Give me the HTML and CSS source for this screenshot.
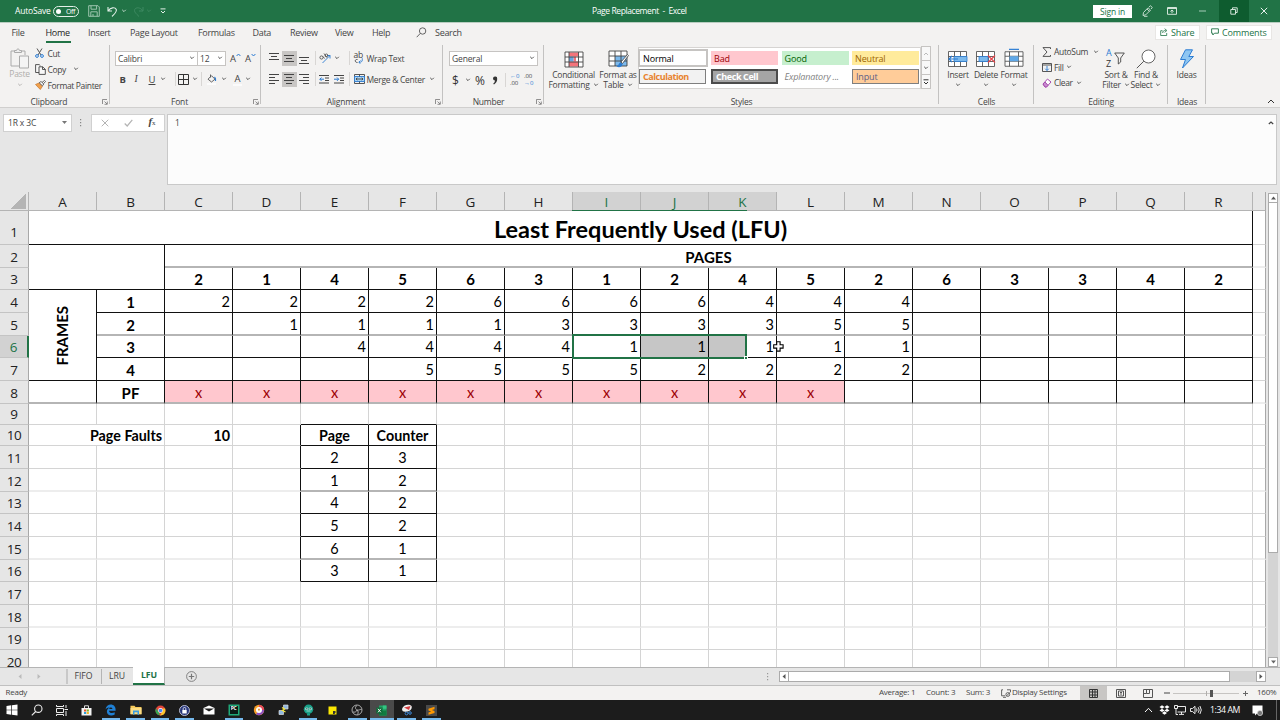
FILE: index.html
```html
<!DOCTYPE html>
<html lang="en">
<head>
<meta charset="utf-8">
<title>Page Replacement - Excel</title>
<link rel="stylesheet" href="styles.css">
</head>
<body>
<svg width="0" height="0" class="defs">
  <symbol id="car" viewBox="0 0 6 4"><path d="M1.200 .8 3 2.600 4.800 .8" fill="none" stroke="currentColor" stroke-width=".9"/></symbol>
  <symbol id="launch" viewBox="0 0 6 6"><path d="M.5 5V.5H5M2.5 2.5 5 5M5.3 2.5v2.8H2.5" fill="none" stroke="#666" stroke-width=".7"/></symbol>
</svg>
<div class="app">
  <header class="titlebar">
    <span class="autosave">AutoSave</span>
    <span class="toggle"><i></i>Off</span>
    <svg width="12" height="12" viewBox="0 0 12 12" fill="none" stroke="#a9cdb9" stroke-width=".9"><path d="M.7.7H10l1.3 1.3v9.3H.7zM3 .8v3.400h5.600V.8M2.800 11.200V6.800h6.400v4.400M5 11V9"/></svg>
    <svg width="11" height="11" viewBox="0 0 11 11" fill="none" stroke="#e4f0e9" stroke-width="1.1"><path d="M1 1v4h4M1.300 4.700C3.500 1.300 8 .9 9.300 3.500 10 6 8 7.500 5 10.500"/></svg>
    <svg class="pale" width="6" height="4"><use href="#car"/></svg>
    <svg class="dim" width="11" height="11" viewBox="0 0 11 11" fill="none" stroke="#3f8a62" stroke-width="1"><path d="M10 1v4H6M9.700 4.700C7.500 1.300 3 .9 1.700 3.500 1 6 3 7.500 6 10.500"/></svg>
    <svg class="faint" width="6" height="4"><use href="#car"/></svg>
    <svg width="6" height="6" viewBox="0 0 6 6" fill="none" stroke="#e4f0e9"><path d="M.5.9h5M1 3l2 2 2-2"/></svg>
    <span class="doc">Page Replacement&nbsp; -&nbsp; Excel</span>
    <span class="signin">Sign in</span>
    <svg width="11" height="12" viewBox="0 0 11 12" fill="none" stroke="#d7e8de" stroke-width=".9"><path d="M1.500 7.500 6 2.800l2.500 2.300-4.700 4.700-2.800.7zM5 4l2.400 2.300M7 2 8.500.8l1.800 1.700L9 4M2 11.300h3.500"/></svg>
    <svg width="10" height="8" viewBox="0 0 10 8" fill="none" stroke="#e4f0e9" stroke-width=".9"><path d="M.5.5h9v6.800h-9zM.5 1.500h9M5 6.200V3M3.400 4.500 5 3l1.600 1.500"/></svg>
    <svg width="7" height="2"><path d="M0 1h7" stroke="#a6cbb7"/></svg>
    <span class="restore"><svg width="8" height="8" viewBox="0 0 8 8" fill="none" stroke="#e4f0e9" stroke-width=".9"><path d="M.8 2.500h4.700v4.700H.8zM2.500 2.400V.8h4.700v4.700H5.600"/></svg></span>
    <svg width="8" height="8" viewBox="0 0 8 8"><path d="M.8.8l6.400 6.400M7.200.8.8 7.200" stroke="#fff" stroke-width=".9"/></svg>
  </header>

  <nav class="tabs">
    <span>File</span><span class="on">Home</span><span>Insert</span><span>Page Layout</span><span>Formulas</span><span>Data</span><span>Review</span><span>View</span><span>Help</span>
    <svg width="11" height="11" viewBox="0 0 11 11" fill="none" stroke="#555" stroke-width=".9"><circle cx="6.600" cy="4" r="3.200"/><path d="M4.300 6.400.7 10.200"/></svg>
    <span>Search</span>
    <span class="btn share"><svg width="8" height="8" viewBox="0 0 8 8" fill="none" stroke="#217346" stroke-width=".8"><path d="M2.500 2.700H.7v4.800h6V5M2.700 5c0-2 1-2.500 3-2.500M4.600.7l2.300 1.800-2.300 1.900"/></svg>Share</span>
    <span class="btn comm"><svg width="8" height="8" viewBox="0 0 8 8" fill="none" stroke="#217346" stroke-width=".9"><path d="M.6.800h6.800v4.400H3.500L1.800 7V5.200H.6z"/></svg>Comments</span>
  </nav>

  <section class="ribbon">
    <div class="group clip">
      <div class="body">
        <div class="big off">
          <svg width="20" height="21" viewBox="0 0 20 21" fill="none" stroke="#aaa" stroke-width="1"><path d="M1 3h4M11 3h4v4M1 3v15h8"/><path d="M4.500 4.500V2.500h2C6.500.5 9.500.5 9.500 2.500h2v2z" fill="#eee"/><path d="M9.500 8h9v12h-9z" fill="#f4f4f4"/></svg>
          <span>Paste</span><svg class="c" width="6" height="4"><use href="#car"/></svg>
        </div>
        <div class="list">
          <div class="li"><svg width="9" height="10" viewBox="0 0 9 10" fill="none"><path d="M2 .5 6 7M7 .5 3 7" stroke="#555"/><circle cx="2" cy="8" r="1.400" stroke="#2b7cd3"/><circle cx="7" cy="8" r="1.400" stroke="#2b7cd3"/></svg><span>Cut</span></div>
          <div class="li"><svg width="11" height="11" viewBox="0 0 11 11" fill="#f8f8f8" stroke="#444" stroke-width=".9"><path d="M4 8.500H.6V.6h3.600l1.300 1.300"/><path d="M4 2.800h3.700l2.600 2.500v5.100H4zM7.500 2.800v2.700h2.800"/></svg><span>Copy</span><svg class="c" width="6" height="4"><use href="#car"/></svg></div>
          <div class="li"><svg width="11" height="10" viewBox="0 0 11 10"><path d="M.5 4.500 4 3l3.300 3.500-2 3z" fill="#f0a04b" stroke="#c7762b" stroke-width=".7"/><path d="M4.200 2.700 6 1.500 8.700 4 7.500 5.800zM7 2.500 9.600.5l.9 1L8.400 3.800" fill="#fff" stroke="#444" stroke-width=".8"/></svg><span>Format Painter</span></div>
        </div>
      </div>
      <div class="label">Clipboard<svg width="6" height="6"><use href="#launch"/></svg></div>
    </div>

    <div class="group font">
      <div class="body two">
        <div class="r1"><span class="combo">Calibri<svg class="c" width="6" height="4"><use href="#car"/></svg></span><span class="combo">12<svg class="c" width="6" height="4"><use href="#car"/></svg></span>
          <span class="aa">A<svg width="5" height="4" viewBox="0 0 5 4" fill="none" stroke="#2b7cd3"><path d="M.6 3 2.500 1l1.900 2"/></svg></span><span class="aa">A<svg width="5" height="4" viewBox="0 0 5 4" fill="none" stroke="#2b7cd3"><path d="M.6 1 2.500 3l1.900-2"/></svg></span></div>
        <div class="r2"><b>B</b><i>I</i><u>U</u><svg class="c" width="6" height="4"><use href="#car"/></svg><em></em>
          <svg width="11" height="11" viewBox="0 0 11 11" fill="none" stroke="#333"><path d="M.5.5h10v10H.5zM5.500.5v10M.5 5.500h10"/></svg><svg class="c" width="6" height="4"><use href="#car"/></svg><em></em>
          <svg width="10" height="11" viewBox="0 0 10 11" fill="none"><path d="M1 5.200 4.500 1.700 8 5.200 4.500 8zM3.500.5v3" stroke="#555" stroke-width=".9"/><path d="M7.500 3c1 1 1.300 2.500 1 4" stroke="#2b7cd3" stroke-width="1.200"/><path d="M0 9h9v2H0z" fill="#fbfbfb"/></svg><svg class="c" width="6" height="4"><use href="#car"/></svg>
          <span class="fc">A</span><svg class="c" width="6" height="4"><use href="#car"/></svg></div>
      </div>
      <div class="label">Font<svg width="6" height="6"><use href="#launch"/></svg></div>
    </div>

    <div class="group align">
      <div class="body two">
        <div class="r3"><svg width="10" height="14" viewBox="0 0 10 14" stroke="#444"><path d="M0 2.500h10M2 5.500h6M0 8.500h10"/></svg><span class="sel"><svg width="10" height="14" viewBox="0 0 10 14" stroke="#444"><path d="M0 4.500h10M2 7.500h6M0 10.500h10"/></svg></span><svg width="10" height="14" viewBox="0 0 10 14" stroke="#444"><path d="M0 6.500h10M2 9.500h6M0 12.500h10"/></svg><em></em>
          <svg width="12" height="12" viewBox="0 0 12 12" fill="none"><path d="M3.500 11 11 3.500M11 3.500H8M11 3.500v3" stroke="#2b7cd3" stroke-width=".9"/><circle cx="2.500" cy="5.500" r="1.600" stroke="#444" stroke-width=".8"/><path d="M4 4.500l1.500 2M5 1.500l3 4" stroke="#444" stroke-width=".8"/><circle cx="7.400" cy="3.400" r="1.400" stroke="#444" stroke-width=".8"/></svg><svg class="c" width="6" height="4"><use href="#car"/></svg><em></em>
          <span class="wi">ab<svg width="9" height="6" viewBox="0 0 9 6" fill="none"><path d="M3.500 1.500C.5 1 .5 4.500 3.500 4.500" stroke="#444" stroke-width=".9"/><path d="M8.300.3v1.500c0 2-1.300 2.500-3.300 2.500M6.500 2.500 4.800 4.300l1.700 1.500" stroke="#2b7cd3" stroke-width=".9"/></svg></span><span class="wt">Wrap Text</span></div>
        <div class="r3"><svg width="10" height="14" viewBox="0 0 10 14" stroke="#444"><path d="M0 2.500h10M0 5.500h6M0 8.500h10M0 11.500h6"/></svg><span class="sel"><svg width="10" height="14" viewBox="0 0 10 14" stroke="#444"><path d="M0 2.500h10M2 5.500h6M0 8.500h10M2 11.500h6"/></svg></span><svg width="10" height="14" viewBox="0 0 10 14" stroke="#444"><path d="M0 2.500h10M4 5.500h6M0 8.500h10M4 11.500h6"/></svg><em></em>
          <svg width="11" height="9" viewBox="0 0 11 9" fill="none" stroke="#444"><path d="M0 .5h10M6 3h4M6 5.500h4M0 8h10"/><path d="M5 4.200H.8M2.500 2.500.8 4.200l1.700 1.700" stroke="#2b7cd3"/></svg><svg width="11" height="9" viewBox="0 0 11 9" fill="none" stroke="#444"><path d="M0 .5h10M6 3h4M6 5.500h4M0 8h10"/><path d="M0 4.200h4.500M3 2.500l1.700 1.700L3 5.900" stroke="#2b7cd3"/></svg><em></em>
          <svg width="11" height="10" viewBox="0 0 11 10" fill="none" stroke="#444" stroke-width=".9"><path d="M.5.5h10v9H.5z"/><path d="M.5 2.500h10v5H.5z" fill="#a9d3f2" stroke="#2b7cd3"/><path d="M2 5h7M3.300 3.800 2 5l1.300 1.200M7.700 3.800 9 5 7.700 6.200M5.500.5v2M5.500 7.500v2"/></svg><span class="mt">Merge &amp; Center</span><svg class="c" width="6" height="4"><use href="#car"/></svg></div>
      </div>
      <div class="label">Alignment<svg width="6" height="6"><use href="#launch"/></svg></div>
    </div>

    <div class="group number">
      <div class="body two">
        <div class="r4"><span class="combo gen">General<svg class="c" width="6" height="4"><use href="#car"/></svg></span></div>
        <div class="r5"><span class="sym">$</span><svg class="c" width="6" height="4"><use href="#car"/></svg><span class="sym">%</span><svg width="6" height="9" viewBox="0 0 6 9"><path d="M3 .5A2 2 0 1 0 3 4.500Q3 6.500 1.200 7.800L2 8.500Q5.300 6.300 5.200 2.700A2 2 0 0 0 3 .5z" fill="#333"/></svg><em></em>
          <span class="dec"><i>←0</i><s>.00</s></span><span class="dec"><s>.00</s><i>→0</i></span></div>
      </div>
      <div class="label">Number<svg width="6" height="6"><use href="#launch"/></svg></div>
    </div>

    <div class="group sty">
      <div class="body">
        <div class="big cf">
          <svg width="20" height="16" viewBox="0 0 20 16"><path fill="#fff" d="M1 .5h18v15H1z"/><path fill="#f3747b" d="M5 1h9v4H5zM5 10h9v5H5z"/><path fill="#f3747b" d="M9.500 5H12v5H9.500z"/><path fill="#6aa7e0" d="M5 5h4.500v5H5z"/><path fill="none" stroke="#444" stroke-width=".9" d="M1 .5h18v15H1zM1 5.500h18M1 10.500h18M5 .5v15M14.500.5v15"/></svg>
          <span>Conditional</span><span>Formatting <svg class="c" width="6" height="4"><use href="#car"/></svg></span>
        </div>
        <div class="big ft">
          <svg width="21" height="18" viewBox="0 0 21 18"><path fill="#fff" d="M1 .5h18v15H1z"/><path fill="#7cb9ec" d="M7 5.500h12v10H7z"/><path fill="none" stroke="#444" stroke-width=".9" d="M1 .5h18v15H1zM1 5.500h18M1 10.500h18M7 .5v15M13 .5v15"/><path d="M19.500 4 13 11.500l1.500 1.500L20.500 5z" fill="#fff" stroke="#444" stroke-width=".8"/><path d="M12.500 12c-2 .5-1.500 3-4 4 3 2 6 0 6-2.500z" fill="#2b7cd3"/></svg>
          <span>Format as</span><span>Table <svg class="c" width="6" height="4"><use href="#car"/></svg></span>
        </div>
        <div class="gallery">
          <span class="normal">Normal</span><span class="bad">Bad</span><span class="good">Good</span><span class="neu">Neutral</span>
          <span class="calc">Calculation</span><span class="chk">Check Cell</span><span class="exp">Explanatory ...</span><span class="inp">Input</span>
        </div>
        <div class="gs"><i><svg width="6" height="4" viewBox="0 0 6 4" fill="none" stroke="#bbb"><path d="M1 3l2-2 2 2"/></svg></i><i><svg width="6" height="4"><use href="#car"/></svg></i><i><svg width="6" height="6" viewBox="0 0 6 6" fill="none" stroke="#333"><path d="M.5.8h5M1 3l2 2 2-2"/></svg></i></div>
      </div>
      <div class="label">Styles</div>
    </div>

    <div class="group cells">
      <div class="body">
        <div class="big"><svg width="20" height="17" viewBox="0 0 20 17"><path fill="#fff" stroke="#555" stroke-width=".9" d="M.5.500h18v15H.5zM.5 5.500h18M.5 10.500h18M6.500.5v15M12.500.5v15"/><path fill="#7cb9ec" stroke="#2b7cd3" stroke-width=".8" d="M6 5.500h13v5H6z"/><path d="M10 8H1M4 5 1 8l3 3" fill="none" stroke="#2b7cd3" stroke-width="1.200"/></svg><span>Insert</span><svg class="c" width="6" height="4"><use href="#car"/></svg></div>
        <div class="big"><svg width="20" height="17" viewBox="0 0 20 17"><path fill="#fff" stroke="#555" stroke-width=".9" d="M.5.500h18v15H.5zM.5 5.500h18M.5 10.500h18M6.500.5v15M12.500.5v15"/><path fill="#7cb9ec" stroke="#2b7cd3" stroke-width=".8" d="M3 5.500h9v5H3z"/><path d="M12 4.500 19 11.500M19 4.500 12 11.500" stroke="#e8474c" stroke-width="1.200"/></svg><span>Delete</span><svg class="c" width="6" height="4"><use href="#car"/></svg></div>
        <div class="big fm"><svg width="20" height="19" viewBox="0 0 20 19"><path d="M5 .6h10" stroke="#2b7cd3" stroke-width="1.200"/><path fill="#fff" stroke="#555" stroke-width=".9" d="M1 3h18v14.500H1zM1 7.500h18M1 12.500h18M5.500 3v14.500M14.500 3v14.500"/><path fill="#5fa8e8" d="M5.500 7.500h9v5h-9z"/></svg><span>Format</span><svg class="c" width="6" height="4"><use href="#car"/></svg></div>
      </div>
      <div class="label">Cells</div>
    </div>

    <div class="group edit">
      <div class="body">
        <div class="list">
          <div class="li"><svg width="10" height="10" viewBox="0 0 10 10" fill="none" stroke="#444" stroke-width=".9"><path d="M8.500 2V.6H1L5 5 1 9.400h7.500V8"/></svg><span>AutoSum</span><svg class="c" width="6" height="4"><use href="#car"/></svg></div>
          <div class="li"><svg width="10" height="9" viewBox="0 0 10 9" fill="none" stroke="#444" stroke-width=".9"><path d="M.5.5h9v8h-9zM.5 2h9"/><path d="M5 3v4.500M3.200 5.700 5 7.500l1.800-1.800" stroke="#2b7cd3"/></svg><span>Fill <svg class="c" width="6" height="4"><use href="#car"/></svg></span></div>
          <div class="li"><svg width="10" height="10" viewBox="0 0 10 10" fill="#fff" stroke="#a64dae" stroke-width="1"><path d="M1 6 5.500 1l3.500 3-4.500 5H3z"/><path d="M1 6l2 3h1.500L6 7.300 3 4z" fill="#c98bd0"/></svg><span>Clear <svg class="c" width="6" height="4"><use href="#car"/></svg></span></div>
        </div>
        <div class="big sf"><span class="az"><b>A</b><b>Z</b><svg width="11" height="13" viewBox="0 0 11 13" fill="none" stroke="#444" stroke-width=".9"><path d="M.7 1h9.600L6.700 6v4L4.300 12V6z"/></svg></span><span>Sort &amp;</span><span>Filter <svg class="c" width="6" height="4"><use href="#car"/></svg></span></div>
        <div class="big fs"><svg width="20" height="20" viewBox="0 0 20 20"><circle cx="12.500" cy="7.500" r="6.500" fill="#fff" stroke="#555" stroke-width=".9"/><path d="M7.800 12.200.8 19.200" stroke="#555" stroke-width="1"/></svg><span>Find &amp;</span><span>Select <svg class="c" width="6" height="4"><use href="#car"/></svg></span></div>
      </div>
      <div class="label">Editing</div>
    </div>

    <div class="group ideas">
      <div class="body"><div class="big"><svg width="16" height="20" viewBox="0 0 16 20"><path d="M6.500.8h7L9.800 7.500h4.700L3.500 19l3-8.500H1.500z" fill="#8ec6f2" stroke="#2b7cd3" stroke-width="1"/></svg><span>Ideas</span></div></div>
      <div class="label">Ideas</div>
    </div>
    <div class="collapse"><svg width="8" height="5" viewBox="0 0 8 5" fill="none" stroke="#333"><path d="M1 4l3-3 3 3"/></svg></div>
  </section>

  <section class="fbar">
    <div class="name">1R x 3C<svg width="5" height="3"><path d="M0 0h5L2.500 3z" fill="#777"/></svg></div>
    <svg class="dots" width="2" height="8"><path d="M0 0h1.200v1.200H0zM0 3h1.200v1.200H0zM0 6h1.200v1.200H0z" fill="#888"/></svg>
    <div class="fx"><svg width="8" height="8" viewBox="0 0 8 8"><path d="M.7.7l6.600 6.600M7.300.7.7 7.300" stroke="#b4b4b4" stroke-width="1"/></svg><svg width="9" height="8" viewBox="0 0 9 8"><path d="M.7 4.500 3.200 7 8.300.8" fill="none" stroke="#b4b4b4" stroke-width="1.200"/></svg><span><i>f</i>x</span></div>
    <div class="input"><span>1</span><svg width="6" height="4" viewBox="0 0 6 4" fill="none" stroke="#444" stroke-width="1.200"><path d="M.8 3 3 1l2.200 2"/></svg></div>
  </section>

  <main class="work">
    <div class="sheet" id="sheet">
      <div class="selbox"><div class="selfill"></div><i></i></div>
      <svg class="cursor" width="11" height="11" viewBox="0 0 11 11"><path d="M3.700.8h3.400v2.900h3v3.400h-3v3H3.700v-3h-3V3.700h3z" fill="#fff" stroke="#000" stroke-width="1.100"/></svg>
    </div>
    <div class="vscroll">
      <span class="sb"><svg width="5" height="4"><path d="M0 3.500h5L2.500 .5z" fill="#555"/></svg></span>
      <span class="thumb"></span><span class="track"></span>
      <span class="sb"><svg width="5" height="4"><path d="M0 .5h5L2.500 3.500z" fill="#666"/></svg></span>
    </div>
  </main>

  <div class="sheets">
    <svg width="4" height="5"><path d="M3.500 0v5L.5 2.500z" fill="#bbb"/></svg><svg width="4" height="5"><path d="M.5 0v5l3-2.500z" fill="#bbb"/></svg>
    <span class="tab f">FIFO</span><span class="tab l">LRU</span><span class="tab on">LFU</span>
    <svg class="plus" width="11" height="11" viewBox="0 0 11 11" fill="none" stroke="#777" stroke-width=".9"><circle cx="5.500" cy="5.500" r="4.900"/><path d="M5.500 2.800v5.400M2.800 5.500h5.400" stroke-width="1.200"/></svg>
    <svg class="hd" width="2" height="8"><path d="M0 0h1.200v1.200H0zM0 3h1.200v1.200H0zM0 6h1.200v1.200H0z" fill="#999"/></svg>
    <div class="hscroll"><span class="sb"><svg width="4" height="5"><path d="M3.500 0v5L.5 2.500z" fill="#555"/></svg></span><span class="thumb"></span><span class="track"></span><span class="sb"><svg width="4" height="5"><path d="M.5 0v5l3-2.500z" fill="#555"/></svg></span></div>
  </div>

  <footer class="status">
    <span class="ready">Ready</span><span>Average: 1</span><span>Count: 3</span><span>Sum: 3</span>
    <svg width="10" height="9" viewBox="0 0 10 9" fill="none" stroke="#555" stroke-width=".9"><path d="M2 .8H.6v6h3.500M6 .8h3.500v2.500M2 8.300h3"/><circle cx="6.800" cy="5.500" r="1.900"/><path d="M5.300 7 9 3.500"/></svg>
    <span>Display Settings</span>
    <div class="view on"><svg width="9" height="9" viewBox="0 0 9 9" fill="none" stroke="#333"><path d="M.5.500h8v8h-8zM3.500.5v8M6 .5v8M.5 3h8M.5 6h8"/></svg></div>
    <div class="view"><svg width="10" height="9" viewBox="0 0 10 9" fill="none" stroke="#555"><path d="M.5.5h9v8h-9zM2.500 2h5v5h-5zM4 3.500h2M4 5h2"/></svg></div>
    <div class="view"><svg width="10" height="9" viewBox="0 0 10 9" fill="none" stroke="#555"><path d="M.5.5h9v8h-9zM3.500.5v4h3v-4M.5 4.500h3"/></svg></div>
    <svg width="6" height="2"><path d="M0 1h6" stroke="#444"/></svg>
    <div class="slider"><i></i><b></b></div>
    <svg width="5" height="5"><path d="M0 2.500h5M2.500 0v5" stroke="#666"/></svg>
    <span class="pct">160%</span>
  </footer>

  <footer class="taskbar">
    <span><svg width="12" height="12" viewBox="0 0 12 12" fill="#fff"><path d="M.5 2 5.300 1.300v4.400H.5zM6 1.200 11.500.4v5.300H6zM.5 6.300h4.800v4.400L.5 10zM6 6.300h5.500v5.300L6 10.800z"/></svg></span>
    <span><svg width="12" height="12" viewBox="0 0 12 12" fill="none" stroke="#eee" stroke-width="1.100"><circle cx="7.300" cy="4.700" r="3.700"/><path d="M4.700 7.500.8 11.400"/></svg></span>
    <span><svg width="12" height="11" viewBox="0 0 12 11" fill="none" stroke="#eee"><path d="M.5 0v1.500h7V0M.5 3.500h7v4h-7zM.5 11V9.500h7V11M10 0v3M10 6v5M8.500 4.500H12"/></svg></span>
    <span><svg width="11" height="11" viewBox="0 0 11 11"><path d="M.5 3h10v7.500H.5z" fill="#f4f4f4"/><path d="M3.500 3V.8h4V3" fill="none" stroke="#ddd"/><path d="M3 4.500h2.200v2H3z" fill="#e5532d"/><path d="M5.700 4.500h2.200v2H5.700z" fill="#7db52a"/><path d="M3 7h2.200v2H3z" fill="#2a9fd8"/><path d="M5.700 7h2.200v2H5.700z" fill="#f0b52a"/></svg></span>
    <span class="run"><svg width="11" height="12" viewBox="0 0 11 12"><path d="M.5 5.500C1 2 3.300.5 5.700.5c3 0 4.900 2.300 4.900 5v1.200H4c.2 2.700 3.500 2.900 5.700 1.600V10.600C6 12.700 1.700 11 1.900 7.500 2 5.500 3.300 4 5 3.500 2.500 3.200 1.300 4.300.5 5.500zM4.200 5h3.200C7.300 3 4.500 3 4.200 5z" fill="#1f80d6"/></svg></span>
    <span class="run"><svg width="12" height="10" viewBox="0 0 12 10"><path d="M.5.800h4l1 1.200h6v7.200H.5z" fill="#f5c95a"/><path d="M.5 3h11v6.200H.5z" fill="#fbdc83"/><path d="M3 5.500h6v4.200H7.500V7.200h-3v2.500H3z" fill="#3b9de0"/></svg></span>
    <span class="run"><svg width="11" height="11" viewBox="0 0 11 11"><circle cx="5.500" cy="5.500" r="5" fill="#e2453a"/><path d="M1 3.300 4.300 8 4.500 10.400A5 5 0 0 1 1 3.300z" fill="#34a853"/><path d="M10 3.500A5 5 0 0 1 5 10.500L7.700 6V3.500z" fill="#fbc72c"/><circle cx="5.500" cy="5.500" r="2.400" fill="#fff"/><circle cx="5.500" cy="5.500" r="1.800" fill="#4285f4"/></svg></span>
    <span class="run"><svg width="11" height="11" viewBox="0 0 11 11"><circle cx="5.500" cy="5.500" r="5" fill="#27357a" stroke="#c9cde0" stroke-width=".9"/><path d="M3.300 5h4.400v3.500H3.300z" fill="#fff"/><path d="M4.200 5V3.500c0-1.400 2.600-1.400 2.600 0V5" fill="none" stroke="#fff" stroke-width=".8"/></svg></span>
    <span><svg width="12" height="10" viewBox="0 0 12 10"><path d="M.5 3 6 .5 11.500 3v6.500H.5z" fill="#fff"/><path d="M1 3.500h10L6 6.500z" fill="#1d1d1d"/></svg></span>
    <span class="run"><svg width="12" height="12" viewBox="0 0 12 12"><path d="M.5.500h11v11H.5z" fill="#1fa878"/><path d="M2 2h8v8H2z" fill="#0b1a16"/></svg><small>PC</small></span>
    <span><svg width="12" height="12" viewBox="0 0 12 12"><circle cx="6" cy="6" r="5.200" fill="#f59d26"/><path d="M6 .8a5.200 5.200 0 0 1 5.200 5.200H6z" fill="#e2465a"/><path d="M11.200 6A5.200 5.200 0 0 1 3 10.200L6 6z" fill="#8d4fc2"/><circle cx="6" cy="6" r="3" fill="#fff"/><path d="M4.800 4.800h2.400L6 7.500z" fill="#e28b26"/></svg></span>
    <span><svg width="11" height="12" viewBox="0 0 11 12"><path d="M5.500 1h4.500v4H5.500zM1 6.500h4.500v4H1z" fill="#8fb7e0" stroke="#ddd" stroke-width=".7"/><path d="M4 3.500 6.500 5l-2 1.500L7.500 8" fill="none" stroke="#f3e437" stroke-width="1.300"/></svg></span>
    <span class="run"><svg width="11" height="12" viewBox="0 0 11 12"><circle cx="5.500" cy="5.200" r="4.700" fill="#1aa18a"/><path d="M4 9.500h3v2H4z" fill="#1aa18a"/><path d="M2.500 4h2.300v1.600H2.500zM6.200 4h2.300v1.600H6.200zM3.500 7h4" fill="#0c5a50" stroke="#e0f4ef" stroke-width=".6"/></svg></span>
    <span><svg width="9" height="9" viewBox="0 0 9 9"><path d="M.5.500h8v8h-8z" fill="#fce803"/><path d="M5 5h2.500v1.500L6.500 8H5z" fill="#333"/></svg></span>
    <span class="run"><svg width="12" height="12" viewBox="0 0 12 12" fill="none" stroke="#b8b8b8" stroke-width=".9"><circle cx="6" cy="6" r="5"/><path d="M6 1.500C3.500 3 4.500 5.500 6 6c2 .5 3.500-1 4.500-.5M6 6c-.5 2-2.500 2.500-4 2M6 6c1.500 1 1.500 3 .5 4.500"/></svg></span>
    <span class="run act"><svg width="11" height="11" viewBox="0 0 11 11"><path d="M3 .5h7.500v10H3z" fill="#21a366"/><path d="M6.800.5h3.700v3.300H6.800z" fill="#33c481"/><path d="M6.800 5.500h3.700v5H3V8z" fill="#107c41"/><path d="M.3 2.500h6.200v6H.3z" fill="#0e6b38"/><path d="M2 3.800l2.800 3.500M4.800 3.800 2 7.300" stroke="#fff" stroke-width=".9"/></svg></span>
    <span class="run"><svg width="12" height="12" viewBox="0 0 12 12"><path d="M1 5C2 1 8-.5 10.500 2c1 2-1 5-4 5.500S1 8 1 5z" fill="#eee"/><path d="M3 3.500 9.500 2 8 6z" fill="#d33a3e"/><circle cx="5.500" cy="9.500" r="1.400" fill="none" stroke="#3a87d8"/><circle cx="9" cy="9" r="1.300" fill="none" stroke="#3a87d8"/></svg></span>
    <span class="run"><svg width="11" height="11" viewBox="0 0 11 11"><path d="M0 0h11v11H0z" fill="#4a4a4a"/><path d="M2.500 3.700 8.500 1.800v2.400L5.800 5.100l2.700.9v2.100L2.500 9.700V7.500l2.700-1-2.700-.9z" fill="#ff9800"/></svg></span>
    <div class="tray">
      <svg width="9" height="6" viewBox="0 0 9 6" fill="none" stroke="#fff"><path d="M1 5l3.500-3.700L8 5"/></svg>
      <svg width="11" height="10" viewBox="0 0 11 10" fill="#fff"><path d="M3 .3 5.500 2 3 3.700.5 2zM8 .3 10.500 2 8 3.700 5.500 2zM3 3.700 5.500 5.400 3 7.100.5 5.400zM8 3.700l2.500 1.700L8 7.100 5.500 5.400zM5.500 6.300 8 8 5.500 9.700 3 8z"/></svg>
      <svg width="12" height="10" viewBox="0 0 12 10" fill="none" stroke="#fff" stroke-width=".9"><path d="M3.500 1.500h8v5.500h-8M7.500 7v2.300M5 9.400h5M.5.500h3v3h-3zM2 3.500v6H4"/></svg>
      <svg width="12" height="10" viewBox="0 0 12 10" fill="none" stroke="#fff" stroke-width=".9"><path d="M.5 3.500h2L5 1.300v7.400L2.500 6.500h-2zM6.500 3.500q1 1.500 0 3M8.200 2.200q2 2.800 0 5.600M9.900 1q2.800 4 0 8"/></svg>
      <span class="clock">1:34 AM</span>
      <svg width="11" height="11" viewBox="0 0 11 11"><path d="M.5.5h10v8H5L3 10.500v-2H.5z" fill="#fff"/><circle cx="8" cy="8" r="2.600" fill="#777" stroke="#ddd" stroke-width=".7"/></svg>
      <em></em>
    </div>
  </footer>
</div>
<script src="sheet.js"></script>
</body>
</html>
```
FILE: sheet.js
```js
const sheet = document.getElementById('sheet');
const letters = 'ABCDEFGHIJKLMNOPQR';

function put(col, row, colSpan, rowSpan, cls, text) {
  const d = document.createElement('div');
  d.className = cls;
  d.style.gridArea = `${row} / ${col} / span ${rowSpan} / span ${colSpan}`;
  if (text !== undefined && text !== '') {
    const s = document.createElement('span');
    s.textContent = text;
    d.appendChild(s);
  }
  sheet.appendChild(d);
}

const softRows = new Set([2, 5, 8, 12, 15, 18]);
const soft = r => (softRows.has(r) ? ' soft' : '');

put(1, 1, 1, 1, 'corner');
[...letters].forEach((l, i) => put(i + 2, 1, 1, 1, 'colh' + ('IJK'.includes(l) ? ' hot' : ''), l));
put(20, 1, 1, 1, 'colh last');
for (let r = 1; r <= 20; r++) put(1, r + 1, 1, 1, 'rowh' + (r === 6 ? ' hot' : '') + (r === 1 ? ' tall' : ''), String(r));

put(2, 2, 18, 1, 'c k title', 'Least Frequently Used (LFU)');
put(2, 3, 2, 2, 'c k');
put(4, 3, 16, 1, 'c k b mid soft', 'PAGES');
put(2, 5, 1, 4, 'c k b frames', 'FRAMES');

const pages = [2, 1, 4, 5, 6, 3, 1, 2, 4, 5, 2, 6, 3, 3, 4, 2];
const frames = [
  [2, 2, 2, 2, 6, 6, 6, 6, 4, 4, 4],
  ['', 1, 1, 1, 1, 3, 3, 3, 3, 5, 5],
  ['', '', 4, 4, 4, 4, 1, 1, 1, 1, 1],
  ['', '', '', 5, 5, 5, 5, 2, 2, 2, 2],
];
pages.forEach((p, i) => {
  put(i + 4, 4, 1, 1, 'c k b mid', p);
  frames.forEach((f, j) => put(i + 4, j + 5, 1, 1, 'c k end' + soft(j + 4), f[i]));
  put(i + 4, 9, 1, 1, 'c k mid soft' + (i < 10 ? ' fault' : ''), i < 10 ? 'x' : '');
});
for (let j = 0; j < 4; j++) put(3, j + 5, 1, 1, 'c k b mid' + soft(j + 4), j + 1);
put(2, 9, 1, 1, 'c k soft');
put(3, 9, 1, 1, 'c k b mid soft', 'PF');

const counter = [['Page', 'Counter'], [2, 3], [1, 2], [4, 2], [5, 2], [6, 1], [3, 1]];
for (let r = 9; r <= 20; r++) {
  for (let c = 1; c <= 18; c++) {
    if (r === 10 && c <= 2) continue;
    let cls = 'c' + soft(r), text = '';
    const entry = counter[r - 10];
    if (entry && (c === 5 || c === 6)) {
      cls += ' k mid' + (r === 10 ? ' h' : '');
      text = entry[c - 5];
    } else if (r === 10 && c === 3) {
      cls += ' end h';
      text = '10';
    } else if (entry && c === 4) {
      cls += ' kr';
    } else if (r === 9 && (c === 5 || c === 6)) {
      cls += ' kb';
    }
    put(c + 1, r + 1, 1, 1, cls, text);
  }
}
put(2, 11, 2, 1, 'c end h', 'Page Faults');
for (let r = 1; r <= 20; r++) put(20, r + 1, 1, 1, 'c last' + soft(r));
```
FILE: styles.css
```css
* { box-sizing: border-box; }
body { margin: 0; background: #e6e6e6; font-family: "Open Sans", "Noto Sans", sans-serif; font-size: 8.500px; letter-spacing: -.35px; color: #444; overflow: hidden; }
svg { display: block; flex: none; }
.defs { position: absolute; }
.app { width: 1280px; height: 720px; display: flex; flex-direction: column; white-space: nowrap; }
.c { flex: none; }

.titlebar { height: 22px; background: #217346; color: #fff; display: grid; align-items: center; padding: 0 0 1px 15px;
  grid-template-columns: 38px 35px 19px 14px 12px 13px 14px 432px 501px 49px 25px 32px 20px 41px auto; }
.autosave, .doc { line-height: 10px; margin-top: -1px; }
.autosave { letter-spacing: -.2px; }
.doc { letter-spacing: -.4px; }
.toggle { width: 26px; height: 11px; border: 1px solid #e4f0e9; border-radius: 6px; display: flex; align-items: center; gap: 5px; padding-left: 2px; font-size: 7px; }
.toggle i { width: 5px; height: 5px; border-radius: 3px; background: #fff; }
.pale { color: #cfe3d8; }
.faint { color: #3f8a62; }
.signin { width: 39px; height: 13px; background: #fff; color: #217346; display: flex; align-items: center; justify-content: center; letter-spacing: -.15px; }
.restore { width: 30px; height: 22px; background: #0e5c2f; display: flex; align-items: center; justify-content: center; }

.tabs { height: 22px; background: #f3f2f1; border-top: 1px solid #b9cdc1; font-size: 9px; letter-spacing: -.3px; display: grid; align-items: center; padding: 0 0 2px 11.500px;
  grid-template-columns: 34px 42.500px 42px 68px 54.500px 37.500px 45px 37px 44px 19px 720px 51px 65px; }
.tabs .on { position: relative; color: #222; }
.tabs .on::after { content: ""; position: absolute; left: 0; bottom: -4px; width: 25px; height: 2px; background: #217346; }
.btn { height: 15px; background: #fff; border: 1px solid #e8e6e4; color: #217346; display: flex; align-items: center; gap: 3px; padding: 0 0 1px 4px; letter-spacing: -.15px; }
.share { width: 45px; }
.comm { width: 66px; }

.ribbon { height: 64px; background: #f3f2f1; border-bottom: 1px solid #d0cfce; display: flex; }
.group { position: relative; display: flex; flex-direction: column; height: 63px; }
.group::after { content: ""; position: absolute; right: 0; top: 1px; width: 1px; height: 59px; background: #c3c2c1; }
.body { height: 51px; display: flex; }
.label { height: 12px; display: flex; align-items: center; justify-content: center; position: relative; padding-right: 12px; letter-spacing: -.2px; }
.sty .label, .cells .label, .edit .label, .ideas .label { padding-right: 0; }
.label svg { position: absolute; right: 2px; top: 4px; }
.clip { width: 110px; } .font { width: 151px; } .align { width: 182px; } .number { width: 101px; }
.number .label { padding-right: 10px; }
.sty { width: 395px; } .cells { width: 95px; } .edit { width: 134px; } .ideas { width: 38px; }
.big { display: flex; flex-direction: column; align-items: center; line-height: 10.500px; padding-top: 4.500px; letter-spacing: -.25px; }
.big > svg:first-child { height: 21px; }
.big > span { display: flex; align-items: center; gap: 3px; }
.big > .c { margin-top: 3px; }
.off { color: #b0aeac; }
.clip .big { width: 39px; padding-top: 4px; }
.clip .list { padding: 1px 0 0; margin-left: -4px; }
.clip .list, .edit .list { letter-spacing: -.35px; }
.li { height: 16px; display: grid; grid-template-columns: 12.500px 25px 8px; align-items: center; }
.two { flex-direction: column; padding-top: 6.500px; gap: 6px; }
.two > div { height: 15px; display: grid; align-items: center; }
.combo { height: 15px; background: #fff; border: 1px solid #c6c4c2; display: flex; align-items: center; justify-content: space-between; padding: 0 2px; letter-spacing: -.15px; }
em { width: 1px; height: 14px; background: #d8d6d4; display: block; }
.r1 { grid-template-columns: 83px 28px 15px 15px; padding-left: 5px; }
.r1 .combo + .combo { border-left: 0; }
.aa { font-size: 9.500px; display: flex; justify-content: flex-start; padding-left: 4px; }
.aa svg { margin-top: 1px; }
.r2 { grid-template-columns: 15px 14px 11.500px 15px 3px 14px 9px 6px 14px 12px 12px 8px; padding-left: 9.500px; font-size: 9.500px; letter-spacing: 0; }
.r2 i { font-family: "Liberation Serif", serif; font-style: italic; }
.fc { border-bottom: 2px solid #fbfbfb; width: 9px; text-align: center; line-height: 11px; }
.r3 { grid-template-columns: 13px 17px 16px 4px 15px 15px 5px 13px 62px 8px; padding-left: 7.500px; letter-spacing: -.3px; }
.sel { width: 15px; height: 15px; background: #c8c6c4; display: flex; justify-content: center; align-items: center; }
.wi { line-height: 6px; font-size: 8.500px; }
.r4 { padding-left: 6px; grid-template-columns: 89px; }
.r5 { grid-template-columns: 13px 10px 17px 13px 5px 14px 15px; padding-left: 9px; }
.sym { font-size: 12px; color: #333; }
.dec { font-size: 6px; line-height: 7px; letter-spacing: -.1px; display: flex; flex-direction: column; gap: 0; }
.dec i { font-style: normal; color: #2b7cd3; } .dec s { text-decoration: none; }
.cf { width: 59px; } .ft { width: 30px; }
.gallery { flex: none; width: 283px; height: 42px; margin: 3px 0 0 5px; background: #fff; border: 1px solid #d6d4d2; display: grid; grid-template-columns: 70px 70.500px 70.500px 68px; grid-template-rows: 20px 17px; align-items: center; font-size: 9px; letter-spacing: -.15px; }
.gallery span { width: 67px; height: 14.500px; padding-left: 3px; display: flex; align-items: center; line-height: 1; }
.gallery .normal { width: 70px; height: 18px; border: 2px solid #c6c4c2; color: #000; margin-left: -1px; }
.bad { background: #ffc7ce; color: #9c0006; margin-left: 2px; } .good { background: #c6efce; color: #006100; margin-left: 2px; } .neu { background: #ffeb9c; color: #9c6500; margin-left: 2px; }
.calc { background: #f2f2f2; color: #e8832f; font-weight: bold; border: 1px solid #7f7f7f; letter-spacing: -.45px; }
.chk { background: #a5a5a5; color: #fff; font-weight: bold; border: 2px solid #4c4c4c; margin-left: 2px; letter-spacing: -.4px; }
.exp { color: #7f7f7f; font-style: italic; margin-left: 2px; }
.inp { background: #ffcc99; color: #5d5d87; border: 1px solid #7f7f7f; margin-left: 2px; }
.gs { width: 10px; height: 42px; margin-top: 3px; display: flex; flex-direction: column; }
.gs i { flex: 1; border: 1px solid #c6c4c2; margin-top: -1px; display: flex; align-items: center; justify-content: center; background: #f8f8f8; }
.cells .big { width: 28px; } .cells .body { padding-left: 5px; }
.cells .fm { padding-top: 3px; } .cells .fm > svg:first-child { height: 22.500px; }
.edit .body { padding-left: 8px; }
.edit .list { width: 59px; }
.edit .li { height: 15.500px; grid-template-columns: 12px 39px 8px; }
.edit .li span { display: flex; align-items: center; gap: 3px; }
.sf { width: 30px; } .fs { width: 30px; } .edit .big { padding-top: 3.500px; } .edit .big > :first-child { height: 22px; }
.az { display: grid !important; grid-template: 11px 11px / 7px 12px; gap: 0 1px !important; line-height: 10px; font-size: 9px; }
.az b { font-weight: 400; color: #2b7cd3; } .az b + b { color: #333; grid-row: 2; } .az svg { grid-area: 1 / 2 / span 2; }
.ideas .big { width: 37px; padding-top: 3.500px; } .ideas .big > svg:first-child { height: 22px; }
.collapse { flex: 1; display: flex; align-items: flex-end; justify-content: flex-end; padding: 0 5px 3px; }

.fbar { height: 84px; flex: none; background: #e6e6e6; display: grid; grid-template-columns: 69px 20px 75px 1110px; padding: 6px 0 8px 3px; align-items: start; letter-spacing: -.15px; }
.name { width: 69px; height: 18px; background: #fff; border: 1px solid #d0d0d0; display: flex; align-items: center; justify-content: space-between; padding: 0 4px 1px; }
.dots { margin: 5px 0 0 8px; }
.fx { width: 74px; height: 18px; margin-left: -1px; background: #fff; border: 1px solid #d0d0d0; display: flex; align-items: center; justify-content: space-around; padding: 0 1px; font-family: "Liberation Serif", serif; font-size: 7px; }
.fx span { line-height: 14px; margin-top: -2px; }
.fx i { font-size: 11px; font-weight: bold; }
.input { height: 71px; background: #fcfcfc; border: 1px solid #c9c9c9; display: flex; justify-content: space-between; padding: 2px 2px 0 7px; }
.input svg { margin-top: 4px; }

.work { height: 475px; flex: none; display: flex; background: #e6e6e6; }
.sheet { position: relative; width: 1266px; height: 475px; display: grid; overflow: hidden; flex: none; letter-spacing: 0;
  grid-template-columns: 29px repeat(18, 68px) 13px;
  grid-template-rows: 19px 34px 23px 22px 23px 23px 22px 23px 23px 21px 21px 23px 23px 22px 23px 23px 22px 23px 23px 22px 23px;
  font-family: Lato, "Open Sans", sans-serif; font-size: 14.500px; color: #000; }
.colh, .rowh { background: #e6e6e6; display: flex; align-items: center; justify-content: center; color: #222; font-family: "Open Sans", sans-serif; font-size: 13.500px; line-height: 1; }
.colh { border-right: 1px solid #b4b4b4; border-bottom: 1px solid #b4b4b4; padding-top: 3px; }
.colh.last { border-right: 0; }
.rowh { border-right: 1px solid #a8a8a8; border-bottom: 1px solid #c4c4c4; align-items: flex-end; padding-bottom: 2.500px; letter-spacing: -.4px; }
.rowh.tall { padding-bottom: 5px; }
.colh.hot, .rowh.hot { background: #d2d2d2; color: #217346; }
.rowh.hot { border-right: 2px solid #217346; }
.corner { border-right: 1px solid #b4b4b4; border-bottom: 1px solid #b4b4b4; background: linear-gradient(135deg, transparent 50%, #b4b4b4 50%) 11px 2px / 15px 15px no-repeat; }
.sheet .c { background: #fff; border-right: 1px solid #d4d4d4; border-bottom: 1px solid #d4d4d4; display: flex; align-items: center; line-height: 1; min-width: 0; padding-top: 2px; }
.sheet .soft { border-bottom: 2px solid #ededed; padding-top: 3px; }
.sheet .k { border-color: #111; }
.sheet .k.soft { border-bottom-color: #b5b5b5; }
.sheet .kr { border-right-color: #111; }
.sheet .kb { border-bottom-color: #111; }
.sheet .last { border-right: 1px solid #a8a8a8; }
.mid, .title { justify-content: center; }
.sheet .end { justify-content: flex-end; padding-right: 2px; }
.b { font-weight: bold; font-size: 15px; }
.h { font-weight: bold; font-size: 14.300px; }
.sheet .title { font-weight: bold; font-size: 23.500px; padding-top: 4px; }
.frames { justify-content: center; }
.frames span { writing-mode: vertical-rl; transform: rotate(180deg); }
.sheet .fault { background: #ffc7ce; color: #9c0006; }
.selbox { position: absolute; left: 572px; top: 142px; width: 175px; height: 25px; border: 2px solid #217346; z-index: 2; }
.selfill { position: absolute; left: 67px; top: 0; right: 0; bottom: 0; background: rgba(0, 0, 0, .225); }
.selbox i { position: absolute; right: -3px; bottom: -3px; width: 4px; height: 4px; background: #217346; border: 1px solid #fff; }
.selbox::before { content: ""; position: absolute; left: -2px; top: -126px; width: 175px; height: 1px; background: #217346; }
.cursor { position: absolute; left: 773px; top: 149px; z-index: 3; }
.vscroll { width: 10px; margin: 0 0 0 2px; padding-top: 1px; display: flex; flex-direction: column; }
.sb { background: #fff; border: 1px solid #ababab; display: flex; align-items: center; justify-content: center; flex: none; }
.vscroll .sb { height: 10px; }
.vscroll .thumb { height: 350px; background: #fff; border: 1px solid #ababab; border-top-width: 0; flex: none; }
.track { flex: 1; background: #d4d4d4; }

.sheets { height: 19px; flex: none; border-top: 1px solid #b4b4b4; border-bottom: 1px solid #c0c0c0; display: grid; align-items: center; padding-left: 18px;
  grid-template-columns: 19px 29px 35px 32px 53px 581px 12px 487px; }
.tab { height: 15px; display: flex; align-items: center; justify-content: center; border-left: 1px solid #b4b4b4; font-size: 8.700px; letter-spacing: -.1px; padding: 0 0 2px; }
.f { border-left: 2px solid #c8c8c8; padding-right: 2px; }
.tab.l { padding-right: 1px; }
.tab.on { width: 32px; height: 18px; background: #fff; color: #217346; font-weight: bold; border: 0; border-bottom: 2px solid #217346; border-right: 1px solid #b4b4b4; margin-top: -2px; padding: 1px 0 0 1px; }
.hscroll { display: flex; height: 11px; }
.hscroll .sb { width: 10px; }
.hscroll .thumb { width: 441px; background: #fff; border: 1px solid #ababab; border-left: 0; }

.status { height: 14px; flex: none; background: #f3f2f1; display: grid; align-items: center; padding-left: 5.500px; font-size: 8px; letter-spacing: -.25px;
  grid-template-columns: 873.500px 47px 40px 35px 11px 68px 27px 27px 30px 9px 70px 14px 30px; }
.status > span { line-height: 10px; margin-top: -3px; }
.view { width: 27px; height: 14px; display: flex; align-items: center; justify-content: center; }
.view.on { background: #c8c6c4; }
.slider { position: relative; width: 66px; height: 1px; background: #c6c4c2; }
.slider b { position: absolute; left: 37px; top: -3px; width: 3px; height: 7px; background: #555; }
.slider i { position: absolute; left: 33px; top: -2px; width: 1px; height: 5px; background: #b0aeac; }

.taskbar { height: 20px; flex: none; background: #1c1c1c; display: flex; align-items: stretch; }
.taskbar > span { position: relative; width: 24.650px; display: flex; align-items: center; justify-content: center; }
.run::after { content: ""; position: absolute; left: 3px; right: 3px; bottom: 0; height: 2px; background: #76b9ed; }
.act { background: #4a4a4a; }
.act::after { left: 0; right: 0; }
.taskbar small { position: absolute; font-size: 5px; font-weight: bold; color: #fff; top: 5px; left: 9px; line-height: 7px; }
.tray { margin-left: auto; color: #fff; display: grid; align-items: center; width: 136px; grid-template-columns: 15px 15px 16px 20px 42px 24px 1px; }
.clock { font-size: 8.700px; letter-spacing: -.4px; padding-bottom: 1px; }
.tray em { background: #666; height: 20px; }
```
